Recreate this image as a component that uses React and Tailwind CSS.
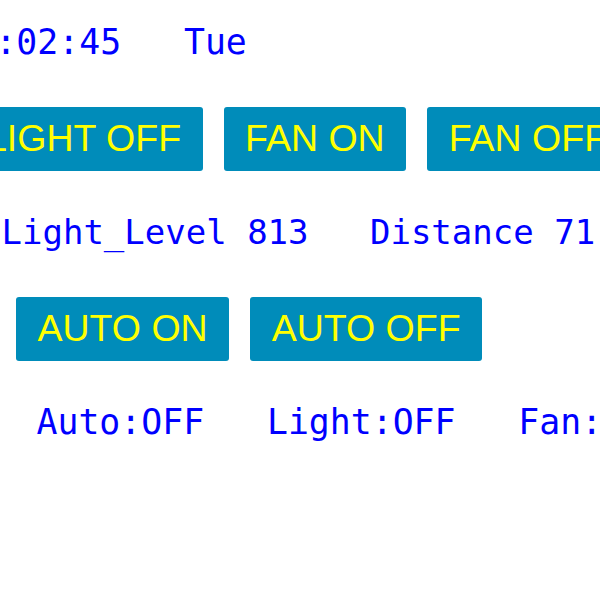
export default function App() {
  const mono = "font-['DejaVu_Sans_Mono',monospace] leading-[40px] text-[#0000ff] whitespace-pre";
  const btn = "shrink-0 h-[64px] px-[21.5px] bg-[#008cba] text-[#ffff00] rounded-[3px] font-['Liberation_Sans',Arial,sans-serif] text-[37.5px] leading-none whitespace-nowrap flex items-center";
  return (
    <div className="w-[600px] h-[600px] overflow-hidden bg-white flex flex-col">
      <div className={mono + " text-[34.8px] mt-[22px] ml-[-46.5px]"}>{"12:02:45   Tue"}</div>
      <div className="flex gap-[21px] mt-[45px] ml-[-276px] w-max">
        <button className={btn}>LIGHT ON</button>
        <button className={btn}>LIGHT OFF</button>
        <button className={btn}>FAN ON</button>
        <button className={btn}>FAN OFF</button>
      </div>
      <div className={mono + " text-[34px] mt-[41px] ml-[1.5px]"}>{"Light_Level 813   Distance 71"}</div>
      <div className="flex gap-[21px] mt-[45px] ml-[16px] w-max">
        <button className={btn}>AUTO ON</button>
        <button className={btn}>AUTO OFF</button>
      </div>
      <div className={mono + " text-[34.8px] mt-[41px] ml-[36.5px]"}>{"Auto:OFF   Light:OFF   Fan:OFF"}</div>
    </div>
  );
}
